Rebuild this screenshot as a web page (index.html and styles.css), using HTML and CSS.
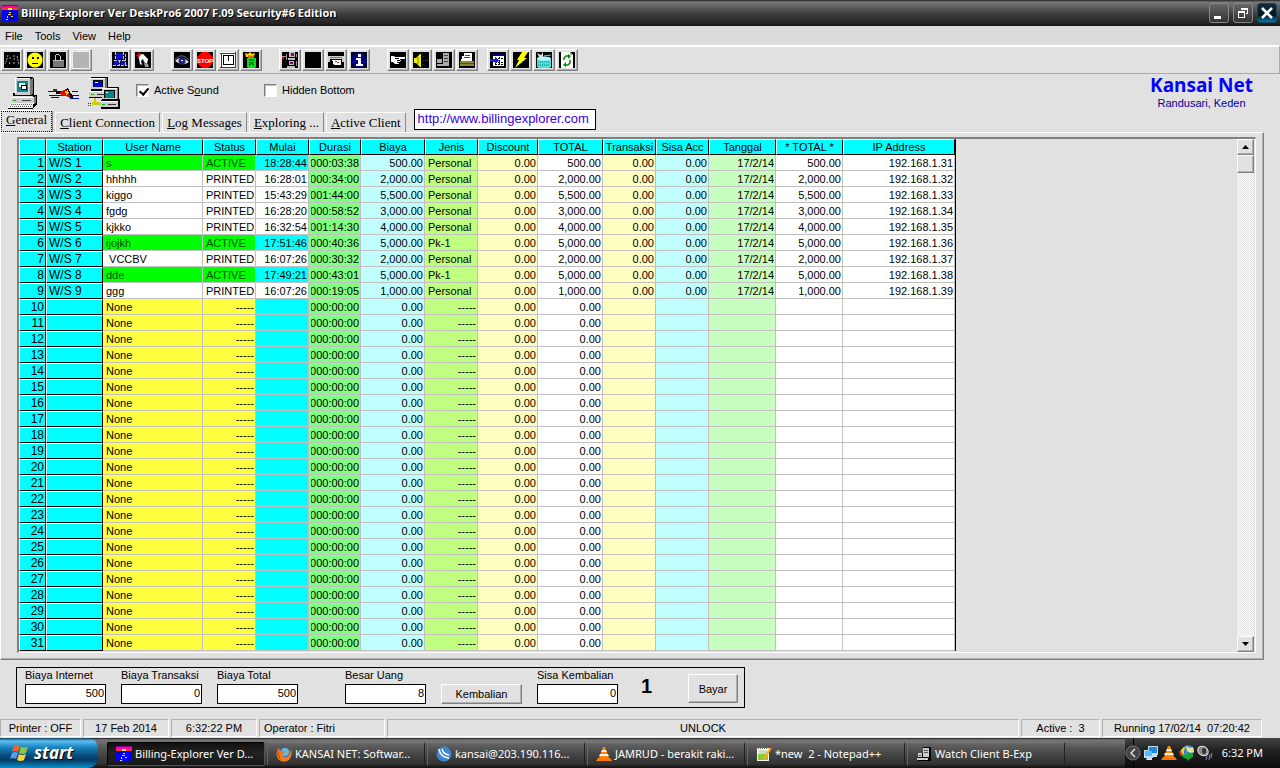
FILE: index.html
```
<!DOCTYPE html>
<html lang="id">

<head>
  <meta charset="UTF-8">
  <meta name="viewport" content="width=device-width, initial-scale=1.0">
  <title>Billing-Explorer</title>
  <link rel="stylesheet" href="styles.css">
</head>

<body>
  <header class="titlebar">
    <svg class="title-icon" viewBox="0 0 16 16" shape-rendering="crispEdges"><use href="#app-icon" /></svg>
    <h1>Billing-Explorer Ver DeskPro6 2007 F.09 Security#6 Edition</h1>
    <div class="win-buttons">
      <button type="button" aria-label="Minimize"><svg viewBox="0 0 18 18"><path d="M4 12h7v3H4z" fill="#fff" /></svg></button>
      <button type="button" aria-label="Restore"><svg viewBox="0 0 18 18" fill="none" stroke="#fff" shape-rendering="crispEdges"><path d="M4.500 7.500h6v6h-6zM4 8.500h7M7.500 6V4.500h6v5h-2M7 5.500h7" /></svg></button>
      <button type="button" class="close" aria-label="Close"><svg viewBox="0 0 18 18"><path d="M4 4l10 10M14 4L4 14" stroke="#fff" stroke-width="2.600" /></svg></button>
    </div>
  </header>

  <nav class="menu">
    <a href="#">File</a>
    <a href="#">Tools</a>
    <a href="#">View</a>
    <a href="#">Help</a>
  </nav>

  <div class="toolbar">
    <div class="tool-group">
      <button type="button" aria-label="Find"><svg viewBox="0 0 16 16"><path fill="#000" d="M0 0h16v16H0z" /><path d="M4 3l-1 4-2 5M6 5v3M10 3v4l1 1M13 4l1 4 1 5M6 10l-1 3M10 10v3" stroke="#aaa" fill="none" stroke-dasharray="2 1" /></svg></button>
      <button type="button" aria-label="Smile"><svg viewBox="0 0 16 16"><path fill="#000" d="M0 0h16v16H0z" /><circle cx="8" cy="8" r="7.600" fill="#ff0" /><path d="M5 5h2v2H5zM10 5h2v2h-2zM5 11h6v1H5z" /></svg></button>
      <button type="button" aria-label="Lock"><svg viewBox="0 0 16 16" shape-rendering="crispEdges"><path fill="#000" d="M0 0h16v16H0z" /><path d="M5.500 8V3.500l1-1h2l2 2V8" stroke="#ccc" fill="none" /><path d="M3 8h11v7H3z" fill="#777" /><path d="M3 8h11v1H3z" fill="#bbb" /></svg></button>
      <button type="button" class="disabled" aria-label="Blank"></button>
    </div>
    <div class="tool-group">
      <button type="button" aria-label="Computers"><svg viewBox="0 0 16 16" shape-rendering="crispEdges"><path fill="#000" d="M0 0h16v16H0z" /><path fill="#11c" d="M4 1h7v6H4zM2 9h5v4H2zM9 9h5v4H9z" /><path d="M3.500 0v9M11.500 0v9M7.500 8v6M1 13.500h14M2 8.500h12M13.500 2v12" stroke="#bcd" fill="none" stroke-dasharray="3 1" /></svg></button>
      <button type="button" aria-label="Drop"><svg viewBox="0 0 16 16"><path fill="#000" d="M0 0h16v16H0z" /><path fill="#fff" d="M3 3l5-1 5 5-1 5-3-2-1-3-2 2 1 4-2-1-1-5z" /><path d="M1 4l3-4 2 2-2 3z" fill="#e00" /><path d="M9 11l4 1 1 3h-4z" fill="#999" /></svg></button>
    </div>
    <div class="tool-group">
      <button type="button" aria-label="Watch"><svg viewBox="0 0 16 16"><path fill="#000" d="M0 0h16v16H0z" /><path d="M1 9q6-7 14 1-7 5-14-1" fill="#ddd" /><circle cx="8" cy="9" r="3.500" fill="#228" /><path d="M1 7q7-7 14 1" stroke="#669" fill="none" /><path fill="#fff" d="M7 8h2v1H7z" /></svg></button>
      <button type="button" aria-label="Stop"><svg viewBox="0 0 16 16"><path fill="#000" d="M0 0h16v16H0z" /><path d="M5 0h6l5 5v6l-5 5H5l-5-5V5z" fill="#f00" /><text x="8" y="11" class="stop-text">STOP</text></svg></button>
      <button type="button" aria-label="Time"><svg viewBox="0 0 16 16" shape-rendering="crispEdges"><path fill="#fff" d="M0 0h16v16H0z" /><path d="M0 1.500h16M1.500 1v15M15.500 0v16M0 15.500h16" stroke="#c00" fill="none" /><path d="M3.500 3.500h10v9h-10z" fill="#fff" stroke="#000" /><path d="M8.500 3v6" stroke="#000" /></svg></button>
      <button type="button" aria-label="Trash"><svg viewBox="0 0 16 16"><path fill="#000" d="M0 0h16v16H0z" /><path d="M3 5L2 1l3 1 2-2 2 2 3-1-1 4z" fill="#fd0" /><path d="M5 3l4 1 2-1v3H5z" fill="#f50" /><path d="M4 6h9v9l-1 1H5l-1-1z" fill="#0d2" /><path d="M6 8h5M6 10l5 3M11 10l-5 3" stroke="#040" /></svg></button>
    </div>
    <div class="tool-group">
      <button type="button" aria-label="Clients"><svg viewBox="0 0 16 16" shape-rendering="crispEdges"><path fill="#000" d="M0 0h16v16H0z" /><path fill="#bbb" d="M7 0h6v5H7zM6 6h7v2H6zM7 9h5v4H7zM5 14h8v2H5z" /><path fill="#808" d="M9 1h3v3H9zM8 10h3v2H8z" /><path d="M0 4.500h4M4.500 2v6M14.500 2v3M14.500 9v5" stroke="#999" fill="none" /><path fill="#d00" d="M0 5h2v2H0z" /></svg></button>
      <button type="button" aria-label="Screen"><svg viewBox="0 0 16 16"><path fill="#000" d="M0 0h16v16H0z" /></svg></button>
      <button type="button" aria-label="Print"><svg viewBox="0 0 16 16" shape-rendering="crispEdges"><path fill="#000" d="M0 0h16v16H0z" /><path fill="#ccc" d="M0 4h16v6h-2V7H2v3H0z" /><path fill="#884" d="M2 5h12v1H2z" /><path fill="#fff" d="M4 8h9v5H6z" /><path fill="#a22" d="M9 10h2v1H9z" /><path fill="#27a" d="M7 9h2v1H7z" /></svg></button>
      <button type="button" aria-label="Info"><svg viewBox="0 0 16 16"><path fill="#000" d="M0 0h16v16H0z" /><circle cx="8" cy="8" r="7.800" fill="#008" /><path fill="#fff" d="M7 2h3v3H7zM5 6h5v6h2v2H5v-2h2V8H5z" /></svg></button>
    </div>
    <div class="tool-group">
      <button type="button" aria-label="Point"><svg viewBox="0 0 16 16"><path fill="#000" d="M0 0h16v16H0z" /><path fill="#fff" d="M1 4h3l1 1h10v2h-5v1h1v1h-1v1H9v2H5L3 10H1z" /><path d="M5 6.500h4M7 8.500h3M7 10.500h2" stroke="#000" /></svg></button>
      <button type="button" aria-label="Sound"><svg viewBox="0 0 16 16"><path fill="#000" d="M0 0h16v16H0z" /><path d="M1 6h2l4-4h1v13H7l-4-4H1z" fill="#ee0" /><path d="M5 5v7" stroke="#880" /><path d="M10 8.500h6M10 5l2-1M10 12l2 2" stroke="#33c" stroke-dasharray="1 1" /></svg></button>
      <button type="button" aria-label="Shut down"><svg viewBox="0 0 16 16" shape-rendering="crispEdges"><path fill="#000" d="M0 0h16v16H0z" /><path fill="#aaa" d="M7 1h6v11H7zM1 7h5v4H1zM1 12h12v2H1z" /><path stroke="#444" d="M8 3.500h4M8 6.500h4M8 9.500h4" /></svg></button>
      <button type="button" aria-label="Printer"><svg viewBox="0 0 16 16" shape-rendering="crispEdges"><path fill="#000" d="M0 0h16v16H0z" /><path fill="#fff" d="M5 1h8v8H2V7h1V4h2z" /><path stroke="#444" d="M6 3.500h5M5 5.500h6" /><path fill="#883" d="M1 9h14v5H1z" /><path fill="#552" d="M1 11h14v1H1z" /></svg></button>
    </div>
    <div class="tool-group near">
      <button type="button" aria-label="Log"><svg viewBox="0 0 16 16" shape-rendering="crispEdges"><path fill="#000" d="M0 0h16v16H0z" /><path fill="#fff" d="M3 2h11v12H3z" /><path fill="#008" d="M3 2h11v2H3z" /><path d="M5 6.500h8M5 10.500h8M5 12.500h8M9.500 5v9" stroke="#000" stroke-dasharray="2 1" /><path fill="#12c" d="M0 7h5V5l4 3-4 4v-2H0z" /></svg></button>
      <button type="button" aria-label="Power"><svg viewBox="0 0 16 16"><path fill="#000" d="M0 0h16v16H0z" /><path fill="#ff0" d="M9 0h6l-4 6h3L2 16l4-8H4z" /></svg></button>
      <button type="button" aria-label="Basket"><svg viewBox="0 0 16 16"><path fill="#000" d="M0 0h16v16H0z" /><path fill="#5dd" d="M1 6h14v9l-2 1H3l-2-1z" /><ellipse cx="8" cy="6.500" rx="7" ry="2" fill="#aff" /><path d="M2 10h12M2 13h12" stroke="#088" stroke-dasharray="1 1" /><path d="M3 5L1 1l4 2 2-3v5" fill="#ddc" /><path d="M8 4l7-1" stroke="#5dd" /></svg></button>
      <button type="button" aria-label="Refresh"><svg viewBox="0 0 16 16"><path fill="#000" d="M0 0h16v16H0z" /><path fill="#fff" d="M2 0h9l3 3v13H2z" /><path d="M11 0v3h3" fill="#aaa" /><path d="M5 8V6l2-2h2M11 8v3l-2 2H7" stroke="#080" stroke-width="1.500" fill="none" /><path fill="#080" d="M9 2l3 2-3 3zM7 10v5l-3-2z" /></svg></button>
    </div>
  </div>

  <section class="options">
    <svg class="pc" viewBox="0 0 32 32" shape-rendering="crispEdges">
      <path fill="#000" d="M9 0h15l2 2v16h3v9l-4 5H3v-1h22V19H5v-3h2V2z" />
      <path fill="#ccc" d="M7 1h15v17H7zM4 20h22v6H4z" />
      <path fill="#777" d="M22 2l3-1v16l-3 1zM26 20l2-1v6l-2 2z" />
      <path fill="#fff" d="M7 1h15v1H7zM7 1h1v16H7zM4 20h22v1H4z" />
      <path fill="#666" d="M9 4h11v11H9z" />
      <path fill="#088" d="M10 5h10v9H10z" />
      <path fill="#fff" d="M11 6h6v4h-6zM14 9h5v4h-5z" />
      <path fill="none" stroke="#000" d="M13.500 8.500h5v4h-5z" />
      <path fill="#0b0" d="M5 23h3v1H5z" />
      <path stroke="#444" d="M14 23.500h9" />
      <path fill="#eee" d="M3 26h23l-3 5H0z" />
      <path d="M3 27.500h21M2 29.500h21" stroke="#666" stroke-dasharray="1 1" />
      <path d="M0 31.500h24" stroke="#000" />
    </svg>
    <svg class="hero" viewBox="0 0 32 14" shape-rendering="crispEdges"><path d="M0 5.500h6M1 9.500h30M24 5.500h6M3 11.500h8M22 12.500h9" stroke="#00d" /><path fill="#333" d="M5 3h4v3H5z" /><path fill="#000" d="M8 5h5v1h5v4h-5V8H8z" /><path fill="#e00" d="M12 6l6-3h2l5 10-7-3h-5z" /><path fill="#000" d="M20 2l6 11h-2L18 3z" /><path fill="#fd0" d="M17 5l3-1 1 3-3 2z" /></svg>
    <svg class="pcs" viewBox="0 0 32 32" shape-rendering="crispEdges"><path fill="#000" d="M3 0h16l1 1v20H1v-7h2zM14 10h17v12h1v10H13v-9h1z" /><path fill="#ccc" d="M3 1h14v11H3zM1 14h17v6H1zM14 11h15v11H14zM12 24h18v6H12z" /><path fill="#777" d="M17 1h2v11h-2zM29 11h1v11h-1z" /><path fill="#fff" d="M3 1h14v1H3zM14 11h15v1H14zM12 24h18v1H12zM1 14h17v1H1z" /><path fill="#000" d="M5 3h10v7H5zM16 13h11v8H16z" /><path fill="#00c" d="M6 4h8v6H6z" /><path fill="#088" d="M17 14h9v7h-9z" /><path fill="#fff" d="M7 5h3v1H7zM18 15h2v1h-2z" /><path fill="#0b0" d="M3 17h3v1H3zM14 27h3v1h-3z" /><path stroke="#333" d="M9 17.500h7M20 27.500h8" /><path fill="#cc0" d="M6 21h2v4h4v3H4v-3h2z" /><path d="M0 26.500h4M0 28.500h4" stroke="#333" stroke-dasharray="1 1" /></svg>
    <label class="check sound"><input type="checkbox" checked><span>Active S<u>o</u>und</span></label>
    <label class="check"><input type="checkbox"><span>Hidden Bottom</span></label>
    <div class="brand">
      <strong>Kansai Net</strong>
      <span>Randusari, Keden</span>
    </div>
  </section>

  <nav class="tabs">
    <button type="button" class="tab selected"><span><u>G</u>eneral</span></button>
    <button type="button" class="tab"><u>C</u>lient Connection</button>
    <button type="button" class="tab"><u>L</u>og Messages</button>
    <button type="button" class="tab"><u>E</u>xploring ...</button>
    <button type="button" class="tab"><u>A</u>ctive Client</button>
    <a class="site" href="#">http://www.billingexplorer.com</a>
  </nav>

  <main class="panel">
    <div class="grid">
      <div class="grid-view">
        <table>
          <colgroup>
            <col class="c-num"><col class="c-station"><col class="c-user"><col class="c-time"><col class="c-time">
            <col class="c-dur"><col class="c-cost"><col class="c-time"><col class="c-disc"><col class="c-total">
            <col class="c-time"><col class="c-time"><col class="c-date"><col class="c-date"><col class="c-ip">
          </colgroup>
          <thead>
            <tr>
              <th></th><th>Station</th><th>User Name</th><th>Status</th><th>Mulai</th><th>Durasi</th><th>Biaya</th>
              <th>Jenis</th><th>Discount</th><th>TOTAL</th><th>Transaksi</th><th>Sisa Acc</th><th>Tanggal</th>
              <th>* TOTAL *</th><th>IP Address</th>
            </tr>
          </thead>
          <tbody id="stations"></tbody>
        </table>
      </div>
      <div class="scrollbar">
        <button type="button" aria-label="Up"><svg viewBox="0 0 8 4"><path d="M0 4l3.500-4L7 4z" /></svg></button>
        <div class="thumb"></div>
        <button type="button" class="down" aria-label="Down"><svg viewBox="0 0 8 4"><path d="M0 0h7L3.500 4z" /></svg></button>
      </div>
    </div>
  </main>

  <form class="payment">
    <label>Biaya Internet<input type="text" value="500"></label>
    <label>Biaya Transaksi<input type="text" value="0"></label>
    <label class="sum">Biaya Total<input type="text" value="500"></label>
    <label>Besar Uang<input type="text" value="8"></label>
    <button type="button" class="change">Kembalian</button>
    <label>Sisa Kembalian<input type="text" value="0"></label>
    <output>1</output>
    <button type="button" class="pay">Bayar</button>
  </form>

  <footer class="status">
    <div class="s-printer">Printer : OFF</div>
    <div class="s-clock">17 Feb 2014</div>
    <div class="s-clock">6:32:22 PM</div>
    <div class="s-operator">Operator : Fitri</div>
    <div class="s-lock">UNLOCK</div>
    <div class="s-active">Active :&nbsp; 3</div>
    <div class="s-running">Running 17/02/14&nbsp; 07:20:42</div>
  </footer>

  <div class="taskbar">
    <button type="button" class="start">
      <svg viewBox="0 0 20 18"><path d="M4 2q3-2 6 0L8 8Q5 6 2 8z" fill="#f0642d" /><path d="M11 2.500q3 2 7 0L16 9q-3 2-7 0z" fill="#8dc63f" /><path d="M2 9q3-2 6 0l-2 6q-3-2-6 0z" fill="#5a9cf0" /><path d="M9 10q3 2 7 0l-2 6q-3 2-7 0z" fill="#ffd23c" /></svg>
      start
    </button>
    <div class="tasks">
      <button type="button" class="task current"><svg viewBox="0 0 16 16" shape-rendering="crispEdges"><use href="#app-icon" /></svg>Billing-Explorer Ver D...</button>
      <button type="button" class="task"><svg viewBox="0 0 16 16"><circle cx="8.500" cy="8" r="6.500" fill="#2a6db8" /><circle cx="9" cy="6" r="4" fill="#69b7e8" /><path d="M2 2l3 3h4l-1 3H6l2 3q5 1 6-5l1-3q2 7-2 11-6 4-11-1Q-1 8 2 2" fill="#f07c16" /><path d="M2 3q-2 7 3 11l-2-5z" fill="#c8400c" /></svg>KANSAI NET: Softwar...</button>
      <button type="button" class="task"><svg viewBox="0 0 16 16"><circle cx="8" cy="8" r="7.500" fill="#3f86cf" /><path d="M3 3q1 8 10 9M6 3q1 5 7 6" stroke="#fff" stroke-width="1.500" fill="none" /></svg>kansai@203.190.116...</button>
      <button type="button" class="task"><svg viewBox="0 0 16 16"><use href="#cone" /></svg>JAMRUD - berakit raki...</button>
      <button type="button" class="task"><svg viewBox="0 0 16 16"><path d="M1 2h12v13H1z" fill="#efe" /><path d="M2 8h10v6H2z" fill="#8c3" /><path d="M2 2h10" stroke="#666" stroke-width="2" stroke-dasharray="1 1" /><path d="M3 5h8M3 7h8" stroke="#9b9" /><path d="M14 1l2 1-6 10-2 2v-3z" fill="#fa2" /><path d="M13 1l1-1 2 1-1 2z" fill="#c22" /></svg>*new&nbsp; 2 - Notepad++</button>
      <button type="button" class="task"><svg viewBox="0 0 16 16" shape-rendering="crispEdges"><path fill="#000" d="M7 1h8v14H2V7h5z" /><path fill="#ccc" d="M7 2h6v9H7zM2 7h4v4H2zM1 12h11v2H1z" /><path stroke="#555" d="M8 4.500h4M8 6.500h4M3 9.500h2" /></svg>Watch Client B-Exp</button>
    </div>
    <div class="tray">
      <svg viewBox="0 0 16 16"><circle cx="8" cy="8" r="7" fill="#444" stroke="#777" /><path d="M10 4L6 8l4 4" stroke="#ddd" stroke-width="1.500" fill="none" /></svg>
      <svg viewBox="0 0 16 16"><path fill="#bde" d="M5 1h10v9H5zM1 5h9v8H1z" /><path fill="#28d" d="M6 2h8v6H6z" /><path fill="#5bf" d="M2 6h7v5H2z" /><path fill="#dde" d="M4 13h5v2H3zM10 10h4v2h-4z" /></svg>
      <svg viewBox="0 0 16 16"><use href="#cone" /></svg>
      <svg viewBox="0 0 16 16"><circle cx="9" cy="6" r="6" fill="#48b" /><path d="M7 1q4 3 7 1l1 5q-4 2-7-1z" fill="#dde8a0" /><path d="M1 9q0-6 6-7-4 4-1 9z" fill="#fc2" /><path d="M0 6q0 3 2 5l2-1-2-4z" fill="#e32" /><path d="M2 9q1 4 6 5v2l7-5-6-4v3q-4 0-7-1" fill="#1a2" /></svg>
      <svg viewBox="0 0 16 16"><ellipse cx="6" cy="6" rx="5.500" ry="4.500" transform="rotate(35 6 6)" fill="#888" stroke="#ddd" /><ellipse cx="7" cy="6" rx="2" ry="3" fill="#333" /><path d="M10 11l-1 4M13 9l-1 6M15 8l-1 5" stroke="#88c" /></svg>
      <time>6:32 PM</time>
    </div>
  </div>

  <svg class="defs">
    <symbol id="app-icon" viewBox="0 0 16 16">
      <path fill="#00f" d="M0 0h16v16H0z" /><path fill="#f0a" d="M0 1h16v2H0z" /><path fill="#f33" d="M0 3h16v2H0z" />
      <path fill="#808" d="M0 0h16v1H0z" /><path fill="#fe0" d="M6 3h4v2H6zM7 7h2v1H7zM6 9h3v1H6zM5 11h1v2H5zM9 11h2v1H9zM4 14h2v1H4z" /><path fill="#005" d="M2 6h2v1H2zM12 7h2v1h-2zM7 13h5v1H7zM12 14h1v1h-1z" />
    </symbol>
    <symbol id="cone" viewBox="0 0 16 16">
      <path fill="#f80" d="M7 1h2l4 11H3z" /><path fill="#eee" d="M6 4h4l1 2H5zM4 8h8l1 2H3z" /><path fill="#f70" d="M2 12h12l2 3H0z" />
    </symbol>
  </svg>
  <script src="script.js"></script>
</body>

</html>
```
FILE: styles.css
```
* {
  box-sizing: border-box;
}

body {
  margin: 0;
  height: 100vh;
  display: flex;
  flex-direction: column;
  overflow: hidden;
  background: #e1e1e1;
  color: #000;
  font: 11px/14px "Liberation Sans", Arial, sans-serif;
}

button,
input {
  font: inherit;
  color: inherit;
  padding: 0;
  margin: 0;
  border-radius: 0;
}

a {
  color: inherit;
  text-decoration: none;
}

svg {
  display: block;
  flex: none;
}

.defs {
  display: none;
}

/* title */
.titlebar {
  height: 26px;
  flex: none;
  display: flex;
  align-items: center;
  gap: 3px;
  padding: 0 3px 0 2px;
  background: linear-gradient(#222 0, #777 2px, #5a5a5a 8px, #3a3a3a 15px, #222 24px, #111 26px);
}

.title-icon {
  width: 16px;
  height: 16px;
}

.titlebar h1 {
  margin: 0;
  flex: 1;
  color: #fff;
  font: bold 11px/16px "Open Sans", "Noto Sans", sans-serif;
  text-shadow: 1px 1px 0 #000;
}

.win-buttons {
  display: flex;
  gap: 4px;
}

.win-buttons button {
  width: 20px;
  height: 20px;
  border: 1px solid #888;
  border-radius: 3px;
  background: linear-gradient(#666, #333);
}

.win-buttons svg {
  width: 18px;
  height: 18px;
}

.win-buttons .close {
  border-color: #124a66;
  background: linear-gradient(#122c3a, #021622 60%, #0878a8);
}

/* menu */
.menu {
  height: 19px;
  flex: none;
  display: flex;
  align-items: center;
  gap: 12px;
  padding: 0 5px;
  background: #dcdcdc;
}

/* toolbar */
.toolbar {
  flex: none;
  display: flex;
  gap: 17px;
  padding: 2px 1px;
  border-top: 2px solid #fff;
  border-bottom: 1px solid #aaa;
  border-right: 1px solid #aaa;
}

.tool-group {
  display: flex;
  gap: 1px;
}

.tool-group.near {
  margin-left: -8px;
}

.tool-group button,
.scrollbar button,
.thumb,
.payment button {
  background: #e1e1e1;
  border: 1px solid;
  border-color: #fff #808080 #808080 #fff;
  box-shadow: inset -1px -1px 0 #b0b0b0;
}

.tool-group button {
  width: 22px;
  height: 22px;
  padding: 2px;
}

.tool-group svg {
  width: 16px;
  height: 16px;
}

.tool-group .disabled {
  background: #b4b4b4 content-box;
  outline: 1px dotted #fff;
  outline-offset: -3px;
}

.stop-text {
  font: bold 6px "Liberation Sans", Arial, sans-serif;
  fill: #fff;
  text-anchor: middle;
}

/* logos and options */
.options {
  height: 36px;
  flex: none;
  display: flex;
  align-items: flex-start;
  padding: 3px 27px 0 8px;
}

.pc,
.pcs {
  width: 32px;
  height: 32px;
}

.hero {
  width: 32px;
  height: 14px;
  margin: 9px 8px 0;
}

.check {
  display: flex;
  align-items: center;
  gap: 5px;
  padding-top: 6px;
}

.check.sound {
  width: 128px;
  margin-left: 16px;
}

.check input {
  appearance: none;
  width: 13px;
  height: 13px;
  border: 1px solid;
  border-color: #808080 #fff #fff #808080;
  background: #fff;
  box-shadow: inset 1px 1px 0 #c0c0c0;
}

.check input:checked::after {
  content: "";
  display: block;
  width: 4px;
  height: 7px;
  margin: 1px 0 0 4px;
  border: solid #000;
  border-width: 0 2px 2px 0;
  transform: rotate(40deg);
}

.brand {
  margin: -2px 0 0 auto;
  display: flex;
  flex-direction: column;
  align-items: center;
  color: #00009c;
}

.brand strong {
  color: #0000ff;
  font: bold 19px/21px "Noto Sans", "DejaVu Sans", sans-serif;
}

/* tabs */
.tabs {
  height: 22px;
  flex: none;
  display: flex;
  align-items: flex-end;
  gap: 2px;
  font: 13px/16px "Liberation Serif", "Times New Roman", serif;
}

.tab {
  height: 20px;
  padding: 1px 4px 0;
  white-space: nowrap;
  border: 1px solid;
  border-color: #fff #888 transparent #fff;
  border-bottom: 0;
  border-radius: 2px 2px 0 0;
  background: #e1e1e1;
}

.tab.selected {
  height: 22px;
  padding: 1px;
}

.tab.selected span {
  display: block;
  height: 19px;
  padding: 0 4px;
  outline: 1px dotted #000;
}

.site {
  align-self: flex-start;
  margin: -1px 0 0 6px;
  padding: 0 6px 2px 3px;
  border: 1px solid #000;
  background: #fff;
  color: #3a00e0;
  font: 13px/17px "Liberation Sans", Arial, sans-serif;
}

/* grid */
.panel {
  flex: 1;
  min-height: 0;
  margin-right: 16px;
  padding: 4px 7px 6px 16px;
  display: flex;
  border: 1px solid;
  border-color: #fff #808080 #808080 #fff;
  box-shadow: inset -1px -1px 0 #b0b0b0;
}

.grid {
  flex: 1;
  min-width: 0;
  display: flex;
  padding-right: 1px;
  border: solid;
  border-color: #808080 #fff #fff #808080;
  border-width: 2px 1px 1px 2px;
}

.grid-view {
  flex: 1;
  min-width: 0;
  overflow: hidden;
}

table {
  width: 937px;
  table-layout: fixed;
  border-collapse: separate;
  border-spacing: 0;
  border-right: 1px solid #000;
}

.c-num { width: 27px; }
.c-station { width: 57px; }
.c-user { width: 100px; }
.c-time { width: 53px; }
.c-dur { width: 52px; }
.c-cost { width: 64px; }
.c-disc { width: 60px; }
.c-total { width: 65px; }
.c-date { width: 67px; }
.c-ip { width: 112px; }

th,
td {
  height: 16px;
  padding: 0 1px 0 3px;
  line-height: 14px;
  font-weight: normal;
  white-space: nowrap;
  overflow: hidden;
  border: solid #c0c0c0;
  border-width: 0 1px 1px 0;
}

thead th,
.num,
.station {
  background: #00ffff;
  border: 1px solid;
  border-color: #fff #000 #000 #fff;
}

thead th {
  padding: 0;
}

.num,
td {
  text-align: right;
}

.num,
.station {
  padding: 0 1px 0 2px;
  line-height: 13px;
  font-size: 12px;
}

.user,
.station,
.jenis,
.active .status-cell {
  text-align: left;
}

.user,
.status-cell,
.mulai,
.total,
.ip {
  background: #fff;
}

.durasi {
  background: #80ff80;
  padding: 0 1px 0 2px;
}

.durasi span {
  display: flex;
  justify-content: flex-end;
  overflow: hidden;
}

.biaya,
.sisa {
  background: #c0ffff;
}

.jenis {
  background: #c0ff80;
}

.yellow {
  background: #ffffc0;
}

.tanggal {
  background: #c8ffc0;
}

.active .user,
.active .status-cell {
  background: #00ff00;
  color: #005000;
}

.active .mulai,
.none .mulai {
  background: #00ffff;
}

.none .user,
.none .status-cell {
  background: #ffff40;
}

.none .jenis {
  text-align: right;
}

.scrollbar {
  width: 17px;
  display: flex;
  flex-direction: column;
  background: repeating-conic-gradient(#fff 0 25%, #e1e1e1 0 50%) 0 0 / 2px 2px;
}

.scrollbar button {
  height: 16px;
  display: flex;
  align-items: center;
  justify-content: center;
}

.scrollbar svg {
  width: 8px;
  height: 4px;
}

.thumb {
  height: 18px;
}

.scrollbar .down {
  margin-top: auto;
}

/* payment */
.payment {
  flex: none;
  align-self: flex-start;
  display: flex;
  gap: 15px;
  margin: 7px 0 10px 16px;
  padding: 0 6px 3px 8px;
  height: 41px;
  border: 1px solid #000;
}

.payment label {
  width: 81px;
  display: flex;
  flex-direction: column;
  gap: 2px;
  white-space: nowrap;
}

.payment .sum {
  margin-right: 32px;
}

.payment input {
  width: 100%;
  height: 20px;
  padding: 0 1px 2px;
  border: 1px solid #000;
  background: #fff;
  text-align: right;
}

.payment .change {
  width: 81px;
  height: 20px;
  align-self: flex-end;
}

.payment output {
  width: 40px;
  padding-left: 8px;
  align-self: center;
  font: bold 20px/22px "Liberation Sans", Arial, sans-serif;
}

.payment .pay {
  width: 50px;
  height: 29px;
  margin-top: 6px;
}

/* status */
.status {
  flex: none;
  height: 20px;
  display: flex;
  gap: 2px;
  padding: 1px 18px 1px 0;
}

.status div {
  border: 1px solid;
  border-color: #b0b0b0 #fff #fff #b0b0b0;
  padding: 0 4px;
  line-height: 16px;
  text-align: center;
  white-space: pre;
}

.status .s-printer { width: 81px; }
.status .s-clock { width: 86px; }
.status .s-operator { width: 126px; text-align: left; }
.status .s-lock { flex: 1; }
.status .s-active { width: 79px; }
.status .s-running { width: 160px; }

/* taskbar */
.taskbar {
  flex: none;
  height: 30px;
  display: flex;
  color: #fff;
  background: linear-gradient(#222 0, #777 2px, #555 10px, #303030 26px, #111 30px);
  font: 11px/14px "Noto Sans", "Open Sans", sans-serif;
}

.start {
  width: 98px;
  display: flex;
  align-items: center;
  gap: 4px;
  padding: 0 0 0 10px;
  border: 0;
  border-radius: 0 10px 10px 0;
  background: linear-gradient(#0a3a5c 0, #5cc0f0 3px, #1c86c0 9px, #075080 17px, #043a64 22px, #0a90c8 30px);
  font: italic bold 17px/20px "Noto Sans", "Open Sans", sans-serif;
  text-shadow: 1px 1px 1px #000;
}

.start svg {
  width: 20px;
  height: 18px;
}

.tasks {
  flex: 1;
  min-width: 0;
  display: flex;
  gap: 2px;
  padding: 4px 0 2px 9px;
}

.task {
  width: 158px;
  display: flex;
  align-items: center;
  gap: 3px;
  padding: 0 8px;
  white-space: nowrap;
  overflow: hidden;
  border: 1px solid;
  border-color: #777 #222 #222 #666;
  border-radius: 2px;
  background: linear-gradient(#666, #484848 45%, #303030);
}

.task.current {
  border-color: #000 #555 #555 #000;
  background: linear-gradient(#111, #222 45%, #181818);
}

.task svg,
.tray svg {
  width: 16px;
  height: 16px;
}

.tray {
  width: 155px;
  display: flex;
  align-items: center;
  gap: 2px;
  background: linear-gradient(90deg, transparent 8px, #000 8px, #000 9px, transparent 9px), linear-gradient(#444, #222 40%, #0c0c0c);
}

.tray time {
  margin-left: auto;
  padding-right: 17px;
}
```
FILE: script.js
```
// station, user, status, start, duration, cost, type
const stations = [
  ["s", "ACTIVE", "18:28:44", "000:03:38", "500.00", "Personal"],
  ["hhhhh", "PRINTED", "16:28:01", "000:34:00", "2,000.00", "Personal"],
  ["kiggo", "PRINTED", "15:43:29", "001:44:00", "5,500.00", "Personal"],
  ["fgdg", "PRINTED", "16:28:20", "000:58:52", "3,000.00", "Personal"],
  ["kjkko", "PRINTED", "16:32:54", "001:14:30", "4,000.00", "Personal"],
  ["ijojkh", "ACTIVE", "17:51:46", "000:40:36", "5,000.00", "Pk-1"],
  ["&nbsp;VCCBV", "PRINTED", "16:07:26", "000:30:32", "2,000.00", "Personal"],
  ["dde", "ACTIVE", "17:49:21", "000:43:01", "5,000.00", "Pk-1"],
  ["ggg", "PRINTED", "16:07:26", "000:19:05", "1,000.00", "Personal"]
]

const body = document.getElementById("stations")

for (let i = 1; i <= 31; i++) {
  const used = i <= stations.length
  const s = used ? stations[i - 1] : ["None", "-----", "", "000:00:00", "0.00", "-----"]
  const row = document.createElement("tr")
  row.className = used ? s[1].toLowerCase() : "none"
  row.innerHTML = `
    <th class="num">${i}</th>
    <th class="station">${used ? "W/S " + i : ""}</th>
    <td class="user">${s[0]}</td>
    <td class="status-cell">${s[1]}</td>
    <td class="mulai">${s[2]}</td>
    <td class="durasi"><span>${s[3]}</span></td>
    <td class="biaya">${s[4]}</td>
    <td class="jenis">${s[5]}</td>
    <td class="yellow">0.00</td>
    <td class="total">${s[4]}</td>
    <td class="yellow">${used ? "0.00" : ""}</td>
    <td class="sisa">${used ? "0.00" : ""}</td>
    <td class="tanggal">${used ? "17/2/14" : ""}</td>
    <td class="total">${used ? s[4] : ""}</td>
    <td class="ip">${used ? "192.168.1." + (30 + i) : ""}</td>
  `
  body.appendChild(row)
}
```
